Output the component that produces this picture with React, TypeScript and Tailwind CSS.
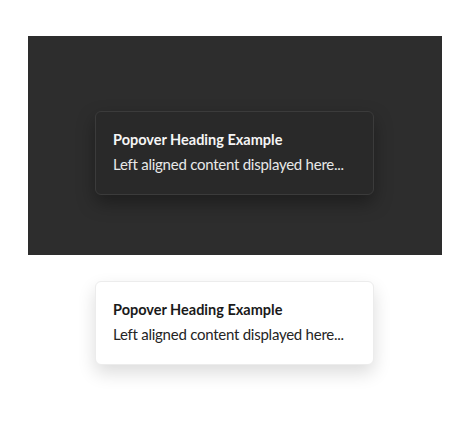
export default function App() {
  const font = { fontFamily: 'Lato, "Noto Sans", sans-serif' };
  return (
    <div className="w-[474px] h-[432px] bg-white" style={font}>
      <div className="pt-[36px] pl-[28px]">
        <div className="w-[414px] h-[219px] bg-[#2d2d2d] pt-[75px] pl-[67px]">
          <div className="w-[279px] h-[84px] rounded-[6px] bg-[#292929] border border-[#3b3b3b] shadow-[0_8px_18px_rgba(0,0,0,0.35)] pl-[17px] pt-[18px]">
            <div className="whitespace-nowrap text-[14.5px] font-bold leading-[20px] text-[#f5f5f5]">Popover Heading Example</div>
            <div className="whitespace-nowrap mt-[4px] text-[15px] tracking-[-0.25px] leading-[20px] text-[#e8e8e8]">Left aligned content displayed here...</div>
          </div>
        </div>
      </div>
      <div className="pt-[26px] pl-[95px]">
        <div className="w-[279px] h-[84px] rounded-[6px] bg-white border border-[#ececec] shadow-[0_8px_18px_rgba(0,0,0,0.14)] pl-[17px] pt-[18px]">
          <div className="whitespace-nowrap text-[14.5px] font-bold leading-[20px] text-[#1a1a1a]">Popover Heading Example</div>
          <div className="whitespace-nowrap mt-[4px] text-[15px] tracking-[-0.25px] leading-[20px] text-[#242424]">Left aligned content displayed here...</div>
        </div>
      </div>
    </div>
  );
}
